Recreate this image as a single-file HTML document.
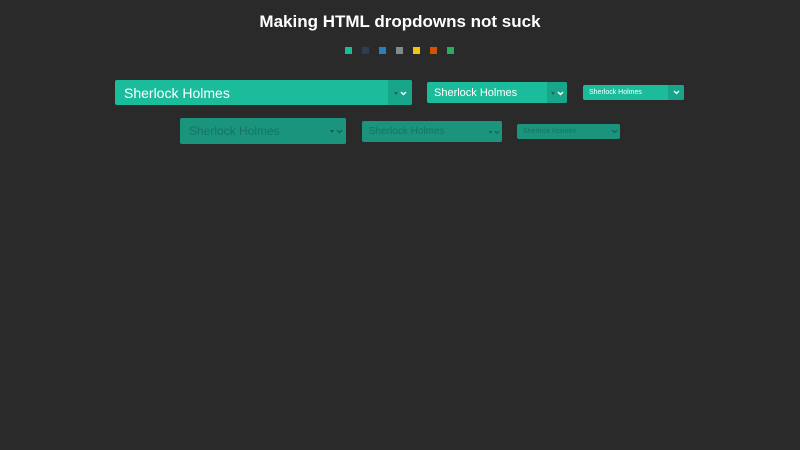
<!DOCTYPE html>
<html><head><style>
body{margin:0;width:800px;height:450px;background:#2a2a2a;font-family:"Liberation Sans",sans-serif;position:relative;overflow:hidden}
h1{position:absolute;top:12px;left:0;width:800px;text-align:center;margin:0;color:#fff;font-size:17px;font-weight:bold}
.d{position:absolute;top:47px;width:7px;height:7px}
.s{position:absolute;background:#1abc9c;border-radius:2px;color:#fff;box-sizing:border-box}
.s .a{position:absolute;right:0;top:0;bottom:0;background:#17a68a;border-radius:0 2px 2px 0;display:flex;align-items:center;justify-content:center;gap:2px}
.s.x{background:#1a947c;color:#157564}
.s.x .a{background:#1a947c}
.t{position:absolute;background:currentColor;width:0;height:0}
</style></head><body>
<h1>Making HTML dropdowns not suck</h1>
<div class="d" style="left:345px;background:#1abc9c"></div>
<div class="d" style="left:362px;background:#2c3e50"></div>
<div class="d" style="left:379px;background:#2980b9"></div>
<div class="d" style="left:396px;background:#7f8c8d"></div>
<div class="d" style="left:413px;background:#f1c40f"></div>
<div class="d" style="left:430px;background:#d35400"></div>
<div class="d" style="left:447px;background:#27ae60"></div>

<div class="s" style="left:115px;top:80px;width:297px;height:25px;font-size:14px;line-height:26px;padding-left:9px">Sherlock Holmes<div class="a" style="width:24px"><svg width="14" height="6" viewBox="0 0 14 6"><path d="M1 2h4l-2 3z" fill="#116d5b"/><path d="M8 2l2.5 2.5L13 2" stroke="#fff" stroke-width="1.4" fill="none"/></svg></div></div>
<div class="s" style="left:427px;top:82px;width:140px;height:21px;font-size:11px;line-height:22px;padding-left:7px">Sherlock Holmes<div class="a" style="width:20px"><svg width="14" height="6" viewBox="0 0 14 6"><path d="M1 2h4l-2 3z" fill="#116d5b"/><path d="M8 2l2.5 2.5L13 2" stroke="#fff" stroke-width="1.4" fill="none"/></svg></div></div>
<div class="s" style="left:583px;top:85px;width:101px;height:15px;font-size:7px;line-height:16px;padding-left:6px">Sherlock Holmes<div class="a" style="width:16px"><svg width="7" height="5" viewBox="0 0 7 5"><path d="M1 1l2.5 2.5L6 1" stroke="#fff" stroke-width="1.3" fill="none"/></svg></div></div>

<div class="s x" style="left:180px;top:118px;width:166px;height:26px;font-size:12px;line-height:27px;padding-left:9px">Sherlock Holmes<div class="a" style="width:20px"><svg width="14" height="6" viewBox="0 0 14 6"><path d="M1 2h4l-2 3z" fill="#0e5e4e"/><path d="M8 2l2.5 2.5L13 2" stroke="#126a58" stroke-width="1.4" fill="none"/></svg></div></div>
<div class="s x" style="left:362px;top:121px;width:140px;height:21px;font-size:10px;line-height:22px;padding-left:7px">Sherlock Holmes<div class="a" style="width:16px"><svg width="12" height="6" viewBox="0 0 14 6"><path d="M1 2h4l-2 3z" fill="#0e5e4e"/><path d="M8 2l2.5 2.5L13 2" stroke="#126a58" stroke-width="1.4" fill="none"/></svg></div></div>
<div class="s x" style="left:517px;top:124px;width:103px;height:15px;font-size:7px;line-height:16px;padding-left:6px">Sherlock Holmes<div class="a" style="width:12px"><svg width="7" height="5" viewBox="0 0 7 5"><path d="M1 1l2.5 2.5L6 1" stroke="#126a58" stroke-width="1.3" fill="none"/></svg></div></div>
</body></html>
